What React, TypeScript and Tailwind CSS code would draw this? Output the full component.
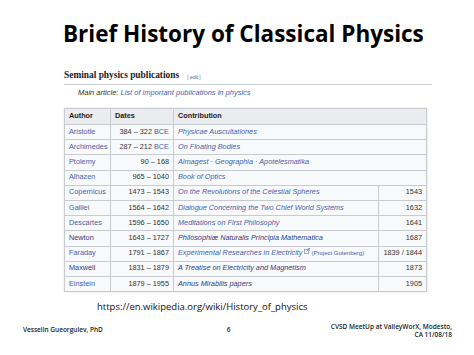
import React from "react";

const link = "text-[#4563ad]";
const visited = "text-[#2f3b7e]";

type Row = {
  author: string;
  av?: boolean;
  dates: React.ReactNode;
  contrib: React.ReactNode;
  cv?: boolean;
  year?: string;
};

const rows: Row[] = [
  { author: "Aristotle", dates: <>384 – 322 <span className={link}>BCE</span></>, contrib: "Physicae Auscultationes" },
  { author: "Archimedes", dates: <>287 – 212 <span className={link}>BCE</span></>, contrib: "On Floating Bodies" },
  { author: "Ptolemy", dates: "90 – 168", contrib: "Almagest · Geographia · Apotelesmatika" },
  { author: "Alhazen", dates: "965 – 1040", contrib: "Book of Optics" },
  { author: "Copernicus", dates: "1473 – 1543", contrib: "On the Revolutions of the Celestial Spheres", year: "1543" },
  { author: "Galilei", dates: "1564 – 1642", contrib: "Dialogue Concerning the Two Chief World Systems", year: "1632" },
  { author: "Descartes", dates: "1596 – 1650", contrib: "Meditations on First Philosophy", year: "1641" },
  { author: "Newton", av: true, dates: "1643 – 1727", contrib: "Philosophiæ Naturalis Principia Mathematica", cv: true, year: "1687" },
  {
    author: "Faraday",
    dates: "1791 – 1867",
    contrib: (
      <>
        Experimental Researches in Electricity
        <svg width="6" height="6" viewBox="0 0 10 10" className="inline-block ml-[1px] align-[1px]">
          <rect x="0.5" y="2.5" width="7" height="7" fill="none" stroke="#6b7fb8" strokeWidth="1" />
          <path d="M4 6 L9.5 0.5 M6 0.5 H9.5 V4" fill="none" stroke="#6b7fb8" strokeWidth="1.2" />
        </svg>
        <span className="not-italic text-[6px] ml-[2px]">(Project Gutenberg)</span>
      </>
    ),
    year: "1839 / 1844",
  },
  { author: "Maxwell", av: true, dates: "1831 – 1879", contrib: "A Treatise on Electricity and Magnetism", cv: true, year: "1873" },
  { author: "Einstein", dates: "1879 – 1955", contrib: "Annus Mirabilis papers", cv: true, year: "1905" },
];

export default function App() {
  return (
    <div className="w-[474px] h-[355px] bg-white overflow-hidden flex flex-col" style={{ fontFamily: "'Liberation Sans', Arial, sans-serif" }}>
      <div className="pt-[19px] pl-[63px] h-[58px] text-[22.5px] leading-[30px] font-bold text-black whitespace-nowrap" style={{ fontFamily: "'Open Sans', sans-serif" }}>
        Brief History of Classical Physics
      </div>

      <div className="ml-[64px] w-[368px] flex items-end border-b border-[#c8ccd1] pb-[2px] h-[27px]">
        <span className="text-[9.4px] leading-[13px] font-bold text-[#222]" style={{ fontFamily: "'Liberation Serif', serif" }}>
          Seminal physics publications
        </span>
        <span className="text-[5px] leading-[10px] text-[#72777d] ml-[8px]">
          [ <span className={link}>edit</span> ]
        </span>
      </div>

      <div className="pl-[78px] pt-[3px] text-[7.5px] leading-[10px] italic text-[#333]">
        Main article: <span className={link}>List of important publications in physics</span>
      </div>

      <div className="pl-[64px] pt-[10px]">
        <table className="w-[362px] table-fixed border-collapse text-[7.3px] shadow-[0_0_2px_rgba(0,0,0,0.15)]">
          <colgroup>
            <col className="w-[46px]" />
            <col className="w-[63px]" />
            <col className="w-[205px]" />
            <col className="w-[48px]" />
          </colgroup>
          <thead>
            <tr className="h-[16px] bg-[#eaecf0]">
              <th className="border border-[#c8ccd1] text-left font-bold px-[4px] text-[#222]">Author</th>
              <th className="border border-[#c8ccd1] text-left font-bold px-[4px] text-[#222]">Dates</th>
              <th colSpan={2} className="border border-[#c8ccd1] text-left font-bold px-[4px] text-[#222]">Contribution</th>
            </tr>
          </thead>
          <tbody>
            {rows.map((r) => (
              <tr key={r.author} className="h-[15.2px] bg-[#f8f9fa]">
                <td className={`border border-[#c8ccd1] px-[4px] whitespace-nowrap ${r.av ? visited : link}`}>{r.author}</td>
                <td className="border border-[#c8ccd1] px-[4px] text-right text-[#333] whitespace-nowrap">{r.dates}</td>
                {r.year ? (
                  <>
                    <td className={`border border-[#c8ccd1] px-[4px] italic whitespace-nowrap ${r.cv ? visited : link}`}>{r.contrib}</td>
                    <td className="border border-[#c8ccd1] px-[4px] text-right text-[#333] whitespace-nowrap">{r.year}</td>
                  </>
                ) : (
                  <td colSpan={2} className={`border border-[#c8ccd1] px-[4px] italic whitespace-nowrap ${r.cv ? visited : link}`}>{r.contrib}</td>
                )}
              </tr>
            ))}
          </tbody>
        </table>
      </div>

      <div className="pl-[97px] pt-[8px] text-[9.5px] leading-[14px] text-[#111]" style={{ fontFamily: "'Open Sans', sans-serif" }}>
        https://en.wikipedia.org/wiki/History_of_physics
      </div>

      <div className="flex items-start justify-between pl-[23px] pr-[22px] pt-[9px] text-[6.5px] leading-[8px] font-semibold text-[#222]" style={{ fontFamily: "'Open Sans', sans-serif" }}>
        <div className="w-[130px] pt-[3px]">Vesselin Gueorguiev, PhD</div>
        <div className="pt-[3px]">6</div>
        <div className="w-[148px] text-right whitespace-nowrap">
          CVSD MeetUp at ValleyWorX, Modesto,
          <br />
          CA 11/08/18
        </div>
      </div>
    </div>
  );
}
